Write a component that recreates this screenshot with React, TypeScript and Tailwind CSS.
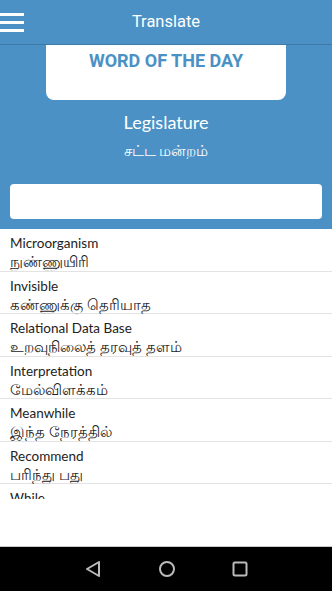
const words = [
  { en: "Microorganism", ta: "நுண்ணுயிரி" },
  { en: "Invisible", ta: "கண்ணுக்கு தெரியாத" },
  { en: "Relational Data Base", ta: "உறவுநிலைத் தரவுத் தளம்" },
  { en: "Interpretation", ta: "மேல்விளக்கம்" },
  { en: "Meanwhile", ta: "இந்த நேரத்தில்" },
  { en: "Recommend", ta: "பரிந்து பது" },
  { en: "While", ta: "போது" },
];

function App() {
  return (
    <div className="w-[332px] h-[591px] flex flex-col bg-white overflow-hidden font-['Lato','Noto_Sans',sans-serif]">
      <header className="relative h-[45px] shrink-0 bg-[#4b91c5] border-b border-[#3f7aa6] flex items-center justify-center">
        <div className="absolute left-0 top-[13px] flex flex-col gap-[5px]">
          <span className="block w-[24px] h-[3px] bg-white" />
          <span className="block w-[24px] h-[3px] bg-white" />
          <span className="block w-[24px] h-[3px] bg-white" />
        </div>
        <h1 className="text-white text-[16.5px] mt-[1px] font-['Roboto',sans-serif]">Translate</h1>
      </header>

      <section className="shrink-0 bg-[#4b91c5] flex flex-col items-center pb-[10px]">
        <div className="w-[240px] h-[55px] bg-white rounded-b-[8px] flex justify-center pt-[2px]">
          <span className="text-[#4b91c5] text-[18px] font-bold font-['Roboto',sans-serif]">WORD OF THE DAY</span>
        </div>
        <p className="mt-[10px] text-white text-[18px] leading-[24px]">Legislature</p>
        <p className="mt-[5px] text-white text-[15px] leading-[22px]">சட்ட மன்றம்</p>
        <input
          type="text"
          className="mt-[23px] w-[312px] h-[35px] bg-white rounded-[4px] outline-none px-2"
        />
      </section>

      <ul className="h-[270px] shrink-0 overflow-hidden">
        {words.map((w) => (
          <li key={w.en} className="h-[42.5px] border-b border-[#e3e3e3] pl-[10px] pt-[5px] text-[#222]">
            <p className="text-[13.5px] leading-[18px]">{w.en}</p>
            <p className="text-[15px] leading-[18px]">{w.ta}</p>
          </li>
        ))}
      </ul>

      <div className="flex-1 border-b border-[#c8c8c8]" />

      <nav className="h-[44px] shrink-0 bg-black flex items-center">
        <svg className="absolute left-[84px]" width="18" height="18" viewBox="0 0 18 18" fill="none" stroke="#bbb" strokeWidth="2" strokeLinejoin="round">
          <path d="M15 2 L3 9 L15 16 Z" />
        </svg>
        <svg className="absolute left-[158px]" width="18" height="18" viewBox="0 0 18 18" fill="none" stroke="#bbb" strokeWidth="2">
          <circle cx="9" cy="9" r="7" />
        </svg>
        <svg className="absolute left-[232px]" width="16" height="16" viewBox="0 0 16 16" fill="none" stroke="#bbb" strokeWidth="2">
          <rect x="1.5" y="1.5" width="13" height="13" rx="1.5" />
        </svg>
      </nav>
    </div>
  );
}

export default App;
